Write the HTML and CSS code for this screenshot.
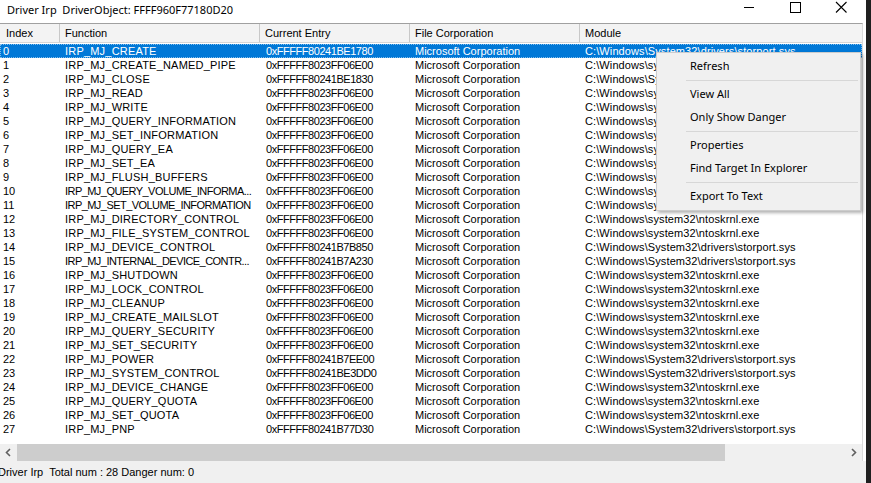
FILE: index.html
```html
<!DOCTYPE html>
<html>
<head>
<meta charset="utf-8">
<link rel="stylesheet" href="styles.css">
</head>
<body>
<div class="screen">
  <div class="window">
    <div class="titlebar">
      <span class="title">Driver Irp&nbsp; DriverObject: FFFF960F77180D20</span>
      <div class="controls">
        <svg class="ctl" width="46" height="20" viewBox="0 0 46 20"><path d="M18 7.5h10" stroke="#000" stroke-width="1"/></svg>
        <svg class="ctl" width="46" height="20" viewBox="0 0 46 20"><rect x="18.5" y="2.5" width="10" height="10" fill="none" stroke="#000" stroke-width="1"/></svg>
        <svg class="ctl" width="46" height="20" viewBox="0 0 46 20"><path d="M18 2l10.5 10.5M28.5 2L18 12.5" stroke="#000" stroke-width="1.1"/></svg>
      </div>
    </div>
    <div class="list">
      <div class="header">
        <div class="hcell c-idx">Index</div>
        <div class="hcell">Function</div>
        <div class="hcell">Current Entry</div>
        <div class="hcell">File Corporation</div>
        <div class="hcell last">Module</div>
      </div>
      <div class="rows">
        <div class="row selected"><span class="idx">0</span><span class="fn">IRP_MJ_CREATE</span><span class="hex">0xFFFFF80241BE1780</span><span class="corp">Microsoft Corporation</span><span class="mod">C:\Windows\System32\drivers\storport.sys</span></div>
        <div class="row"><span class="idx">1</span><span class="fn">IRP_MJ_CREATE_NAMED_PIPE</span><span class="hex">0xFFFFF8023FF06E00</span><span class="corp">Microsoft Corporation</span><span class="mod">C:\Windows\system32\ntoskrnl.exe</span></div>
        <div class="row"><span class="idx">2</span><span class="fn">IRP_MJ_CLOSE</span><span class="hex">0xFFFFF80241BE1830</span><span class="corp">Microsoft Corporation</span><span class="mod">C:\Windows\System32\drivers\storport.sys</span></div>
        <div class="row"><span class="idx">3</span><span class="fn">IRP_MJ_READ</span><span class="hex">0xFFFFF8023FF06E00</span><span class="corp">Microsoft Corporation</span><span class="mod">C:\Windows\system32\ntoskrnl.exe</span></div>
        <div class="row"><span class="idx">4</span><span class="fn">IRP_MJ_WRITE</span><span class="hex">0xFFFFF8023FF06E00</span><span class="corp">Microsoft Corporation</span><span class="mod">C:\Windows\system32\ntoskrnl.exe</span></div>
        <div class="row"><span class="idx">5</span><span class="fn">IRP_MJ_QUERY_INFORMATION</span><span class="hex">0xFFFFF8023FF06E00</span><span class="corp">Microsoft Corporation</span><span class="mod">C:\Windows\system32\ntoskrnl.exe</span></div>
        <div class="row"><span class="idx">6</span><span class="fn">IRP_MJ_SET_INFORMATION</span><span class="hex">0xFFFFF8023FF06E00</span><span class="corp">Microsoft Corporation</span><span class="mod">C:\Windows\system32\ntoskrnl.exe</span></div>
        <div class="row"><span class="idx">7</span><span class="fn">IRP_MJ_QUERY_EA</span><span class="hex">0xFFFFF8023FF06E00</span><span class="corp">Microsoft Corporation</span><span class="mod">C:\Windows\system32\ntoskrnl.exe</span></div>
        <div class="row"><span class="idx">8</span><span class="fn">IRP_MJ_SET_EA</span><span class="hex">0xFFFFF8023FF06E00</span><span class="corp">Microsoft Corporation</span><span class="mod">C:\Windows\system32\ntoskrnl.exe</span></div>
        <div class="row"><span class="idx">9</span><span class="fn">IRP_MJ_FLUSH_BUFFERS</span><span class="hex">0xFFFFF8023FF06E00</span><span class="corp">Microsoft Corporation</span><span class="mod">C:\Windows\system32\ntoskrnl.exe</span></div>
        <div class="row"><span class="idx">10</span><span class="fn tight">IRP_MJ_QUERY_VOLUME_INFORMA...</span><span class="hex">0xFFFFF8023FF06E00</span><span class="corp">Microsoft Corporation</span><span class="mod">C:\Windows\system32\ntoskrnl.exe</span></div>
        <div class="row"><span class="idx">11</span><span class="fn tight">IRP_MJ_SET_VOLUME_INFORMATION</span><span class="hex">0xFFFFF8023FF06E00</span><span class="corp">Microsoft Corporation</span><span class="mod">C:\Windows\system32\ntoskrnl.exe</span></div>
        <div class="row"><span class="idx">12</span><span class="fn">IRP_MJ_DIRECTORY_CONTROL</span><span class="hex">0xFFFFF8023FF06E00</span><span class="corp">Microsoft Corporation</span><span class="mod">C:\Windows\system32\ntoskrnl.exe</span></div>
        <div class="row"><span class="idx">13</span><span class="fn">IRP_MJ_FILE_SYSTEM_CONTROL</span><span class="hex">0xFFFFF8023FF06E00</span><span class="corp">Microsoft Corporation</span><span class="mod">C:\Windows\system32\ntoskrnl.exe</span></div>
        <div class="row"><span class="idx">14</span><span class="fn">IRP_MJ_DEVICE_CONTROL</span><span class="hex">0xFFFFF80241B7B850</span><span class="corp">Microsoft Corporation</span><span class="mod">C:\Windows\System32\drivers\storport.sys</span></div>
        <div class="row"><span class="idx">15</span><span class="fn tight">IRP_MJ_INTERNAL_DEVICE_CONTR...</span><span class="hex">0xFFFFF80241B7A230</span><span class="corp">Microsoft Corporation</span><span class="mod">C:\Windows\System32\drivers\storport.sys</span></div>
        <div class="row"><span class="idx">16</span><span class="fn">IRP_MJ_SHUTDOWN</span><span class="hex">0xFFFFF8023FF06E00</span><span class="corp">Microsoft Corporation</span><span class="mod">C:\Windows\system32\ntoskrnl.exe</span></div>
        <div class="row"><span class="idx">17</span><span class="fn">IRP_MJ_LOCK_CONTROL</span><span class="hex">0xFFFFF8023FF06E00</span><span class="corp">Microsoft Corporation</span><span class="mod">C:\Windows\system32\ntoskrnl.exe</span></div>
        <div class="row"><span class="idx">18</span><span class="fn">IRP_MJ_CLEANUP</span><span class="hex">0xFFFFF8023FF06E00</span><span class="corp">Microsoft Corporation</span><span class="mod">C:\Windows\system32\ntoskrnl.exe</span></div>
        <div class="row"><span class="idx">19</span><span class="fn">IRP_MJ_CREATE_MAILSLOT</span><span class="hex">0xFFFFF8023FF06E00</span><span class="corp">Microsoft Corporation</span><span class="mod">C:\Windows\system32\ntoskrnl.exe</span></div>
        <div class="row"><span class="idx">20</span><span class="fn">IRP_MJ_QUERY_SECURITY</span><span class="hex">0xFFFFF8023FF06E00</span><span class="corp">Microsoft Corporation</span><span class="mod">C:\Windows\system32\ntoskrnl.exe</span></div>
        <div class="row"><span class="idx">21</span><span class="fn">IRP_MJ_SET_SECURITY</span><span class="hex">0xFFFFF8023FF06E00</span><span class="corp">Microsoft Corporation</span><span class="mod">C:\Windows\system32\ntoskrnl.exe</span></div>
        <div class="row"><span class="idx">22</span><span class="fn">IRP_MJ_POWER</span><span class="hex">0xFFFFF80241B7EE00</span><span class="corp">Microsoft Corporation</span><span class="mod">C:\Windows\System32\drivers\storport.sys</span></div>
        <div class="row"><span class="idx">23</span><span class="fn">IRP_MJ_SYSTEM_CONTROL</span><span class="hex">0xFFFFF80241BE3DD0</span><span class="corp">Microsoft Corporation</span><span class="mod">C:\Windows\System32\drivers\storport.sys</span></div>
        <div class="row"><span class="idx">24</span><span class="fn">IRP_MJ_DEVICE_CHANGE</span><span class="hex">0xFFFFF8023FF06E00</span><span class="corp">Microsoft Corporation</span><span class="mod">C:\Windows\system32\ntoskrnl.exe</span></div>
        <div class="row"><span class="idx">25</span><span class="fn">IRP_MJ_QUERY_QUOTA</span><span class="hex">0xFFFFF8023FF06E00</span><span class="corp">Microsoft Corporation</span><span class="mod">C:\Windows\system32\ntoskrnl.exe</span></div>
        <div class="row"><span class="idx">26</span><span class="fn">IRP_MJ_SET_QUOTA</span><span class="hex">0xFFFFF8023FF06E00</span><span class="corp">Microsoft Corporation</span><span class="mod">C:\Windows\system32\ntoskrnl.exe</span></div>
        <div class="row"><span class="idx">27</span><span class="fn">IRP_MJ_PNP</span><span class="hex">0xFFFFF80241B77D30</span><span class="corp">Microsoft Corporation</span><span class="mod">C:\Windows\System32\drivers\storport.sys</span></div>
      </div>
      <div class="hscroll">
        <div class="arrow"><svg width="7" height="9" viewBox="0 0 7 9"><path d="M5 1L1.5 4.5 5 8" fill="none" stroke="#606060" stroke-width="1.6"/></svg></div>
        <div class="track"><div class="thumb"></div></div>
        <div class="arrow"><svg width="7" height="9" viewBox="0 0 7 9"><path d="M2 1l3.5 3.5L2 8" fill="none" stroke="#606060" stroke-width="1.6"/></svg></div>
      </div>
    </div>
    <div class="status">Driver Irp&nbsp; Total num : 28 Danger num: 0</div>
  </div>
  <div class="edge"></div>
  <div class="menu">
    <div class="item">Refresh</div>
    <div class="sep"></div>
    <div class="item">View All</div>
    <div class="item">Only Show Danger</div>
    <div class="sep"></div>
    <div class="item">Properties</div>
    <div class="item">Find Target In Explorer</div>
    <div class="sep"></div>
    <div class="item">Export To Text</div>
  </div>
</div>
</body>
</html>
```

FILE: styles.css
```css
* { box-sizing: border-box; }
html, body { margin: 0; padding: 0; }
body { width: 871px; height: 483px; overflow: hidden; background: #1e1e1e; }

.screen {
  position: relative;
  display: flex;
  width: 871px;
  height: 483px;
}

.window {
  width: 866px;
  height: 483px;
  display: flex;
  flex-direction: column;
  background: #fff;
  font-family: "Liberation Sans", Arial, sans-serif;
  font-size: 11px;
  color: #000;
}

.edge {
  flex: 1;
  background: #1f1f1f;
}

.titlebar {
  height: 23px;
  display: flex;
  align-items: flex-start;
  justify-content: space-between;
  background: #fff;
}
.title {
  font-family: "Noto Sans", "Open Sans", sans-serif;
  font-size: 11px;
  line-height: 20px;
  padding-left: 7px;
  white-space: pre;
}
.controls {
  display: flex;
  padding-right: 2px;
}
.ctl { display: block; }

.list {
  flex: 1;
  display: flex;
  flex-direction: column;
  border-top: 1px solid #a0a0a0;
  border-right: 1px solid #dadada;
  margin-right: 3px;
  background: #fff;
  min-height: 0;
}

.header {
  display: grid;
  grid-template-columns: 60px 200px 150px 170px 1fr;
  height: 19px;
  background: #f3f3f3;
  border-bottom: 1px solid #d6d6d6;
}
.hcell {
  line-height: 18px;
  padding-left: 5px;
  border-right: 1px solid #c8c8c8;
  white-space: nowrap;
  overflow: hidden;
}
.hcell.c-idx { padding-left: 6px; }
.hcell.last { border-right: none; }

.rows {
  flex: 1;
  display: flex;
  flex-direction: column;
  padding-top: 1px;
}
.row {
  display: grid;
  grid-template-columns: 60px 200px 150px 170px 1fr;
  height: 14px;
  line-height: 14px;
  white-space: nowrap;
}
.row > span { overflow: hidden; }
.row .idx { padding-left: 3px; }
.row .fn { padding-left: 5px; letter-spacing: 0.2px; }
.row .fn.tight { letter-spacing: -0.55px; }
.row .hex { padding-left: 6px; letter-spacing: -0.45px; }
.row .corp { padding-left: 5px; }
.row .mod { padding-left: 5px; letter-spacing: 0.1px; }

.row.selected {
  background: #0078d7;
  color: #fff;
  outline: 1px dotted #7fbcec;
  outline-offset: -1px;
}

.hscroll {
  height: 17px;
  display: flex;
  background: #f0f0f0;
}
.arrow {
  width: 17px;
  display: flex;
  align-items: center;
  justify-content: center;
}
.track {
  flex: 1;
  display: flex;
}
.thumb {
  width: 708px;
  background: #cdcdcd;
}

.status {
  height: 22px;
  line-height: 20px;
  background: #f0f0f0;
  text-indent: -2px;
  white-space: pre;
  border-top: 1px solid #f0f0f0;
}

.menu {
  position: absolute;
  left: 656px;
  top: 52px;
  width: 205px;
  padding: 2px;
  background: #f0f0f0;
  border: 1px solid #cccccc;
  box-shadow: 2px 2px 3px rgba(0, 0, 0, 0.3);
  font-family: "Noto Sans", "Open Sans", sans-serif;
  font-size: 11px;
  color: #000;
}
.item {
  height: 23px;
  line-height: 21px;
  padding-left: 31px;
  white-space: nowrap;
}
.sep {
  height: 5px;
  margin-left: 27px;
  display: flex;
  align-items: center;
}
.sep::before {
  content: "";
  flex: 1;
  height: 1px;
  background: #d7d7d7;
}
```
